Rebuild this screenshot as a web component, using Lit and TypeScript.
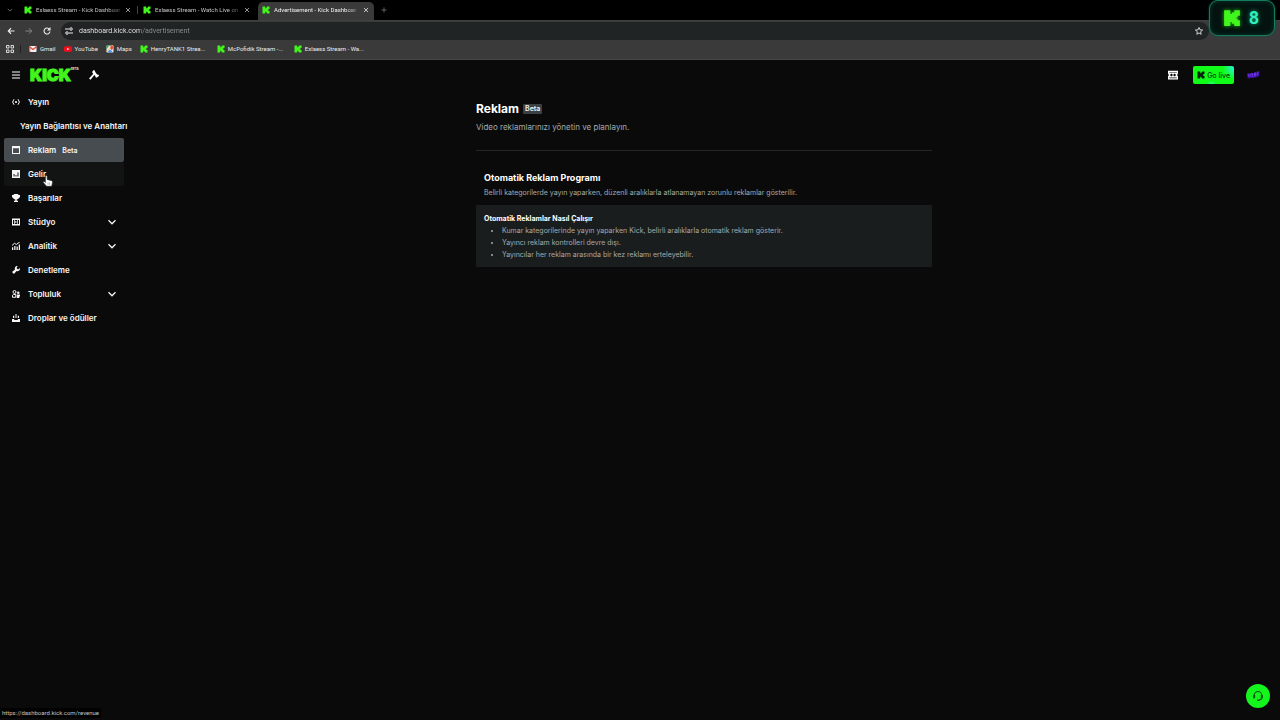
import { LitElement, html, css, svg } from "lit";
import { customElement, property } from "lit/decorators.js";

const kickBlocks = svg`<path d="M1 1h5.500v3.500H8V3h2V1h5v5h-2v1.500h-1.500v1H13V10h2v5h-5v-2H8v-1.500H6.500V15H1z"/>`;

const icons: Record<string, unknown> = {
  menu: svg`<path d="M0 2h16M0 8h16M0 14h16" stroke="currentColor" stroke-width="2"/>`,
  live: svg`<circle cx="8" cy="8" r="2.200" fill="currentColor"/><path d="M4 2.500Q-1.500 8 4 13.500M12 2.500q5.500 5.500 0 11" fill="none" stroke="currentColor" stroke-width="2"/>`,
  window: svg`<path fill-rule="evenodd" d="M0 0h16v16H0zM2 4.500V14h12V4.500z" fill="currentColor"/>`,
  revenue: svg`<path fill-rule="evenodd" d="M0 0h16v16H0zM3 8v5h2V8zM7 10v3h2v-3zM11 5v8h2V5z" fill="currentColor"/>`,
  trophy: svg`<path d="M3.500 0h9v2H16v4l-4 4-2.500 1v2.500H12V16H4v-2.500h2.500V11L4 10 0 6V2h3.500z" fill="currentColor"/>`,
  studio: svg`<path fill-rule="evenodd" d="M0 1h16v14H0zM2 4v8h2V4zM12 4v8h2V4zM5.500 4v8h5V4z" fill="currentColor"/><path d="M6.500 5.500 10 8l-3.500 2.500z" fill="currentColor"/>`,
  analytics: svg`<path d="M0 7l5-4.500L8.500 5 15.500 0" fill="none" stroke="currentColor" stroke-width="2"/><path d="M0 10.500h2.500V16H0zM4.500 8H7v8H4.500zM9 9h2.500v7H9zM13.500 5H16v11h-2.500z" fill="currentColor"/>`,
  wrench: svg`<path d="M16 5.500a5 5 0 0 1-7 4.500L4 16 0 12l6-5a5 5 0 0 1 5.500-7L9 4l3 3 4-3z" fill="currentColor"/>`,
  community: svg`<circle cx="5" cy="4" r="3" fill="none" stroke="currentColor" stroke-width="2"/><path d="M1 14.500v-4L3 9h4.500v5.500z" fill="none" stroke="currentColor" stroke-width="2"/><circle cx="12.500" cy="5.500" r="2.500" fill="currentColor"/><path d="M9.500 9H16v4h-1.500v3h-5z" fill="currentColor"/>`,
  drops: svg`<path d="M0 10h4l1 2h6l1-2h4v6H0zM7 0h2v8H7zM2 3.500h2.500V8H2zM11.500 3.500H14V8h-2.500z" fill="currentColor"/>`,
  chevron: svg`<path d="M1 4.500 8 11.500 15 4.500" fill="none" stroke="currentColor" stroke-width="2.500"/>`,
  gavel: svg`<path d="M7.500 0 9.500 1 10 3l3 4 2.500.500.500 2-4 3-1.500-1-.5-2-1.500-1.500L2.500 15.500 0 13.500 6.500 6.500 6 4.500 4.500 3.500z" fill="currentColor"/>`,
  back: svg`<path d="M15 8H3M8 2.500 2.500 8 8 13.500" fill="none" stroke="currentColor" stroke-width="2.200"/>`,
  forward: svg`<path d="M1 8h12M8 2.500 13.500 8 8 13.500" fill="none" stroke="currentColor" stroke-width="2"/>`,
  reload: svg`<path d="M13 4.500A6 6 0 1 0 14 9" fill="none" stroke="currentColor" stroke-width="2.200"/><path d="M15 0v7H8z" fill="currentColor"/>`,
  tune: svg`<path d="M0 4h8M8 12h8" stroke="currentColor" stroke-width="2"/><circle cx="12" cy="4" r="2.500" fill="none" stroke="currentColor" stroke-width="2"/><circle cx="4" cy="12" r="2.500" fill="none" stroke="currentColor" stroke-width="2"/>`,
  star: svg`<path d="m8 1 2 4.700 5.200.4-4 3.400 1.200 5.100L8 11.900l-4.400 2.700 1.200-5.100-4-3.400L6 5.700z" fill="none" stroke="currentColor" stroke-width="1.700"/>`,
  grid: svg`<path d="M1 1h5v5H1zM10 1h5v5h-5zM1 10h5v5H1zM10 10h5v5h-5z" fill="none" stroke="currentColor" stroke-width="1.800"/>`,
  close: svg`<path d="m2.500 2.500 11 11M13.500 2.500l-11 11" stroke="currentColor" stroke-width="2"/>`,
  plus: svg`<path d="M8 1v14M1 8h14" stroke="currentColor" stroke-width="1.800"/>`,
  down: svg`<path d="m2 5 6 6 6-6" fill="none" stroke="currentColor" stroke-width="2"/>`,
  gmail: svg`<rect x="1" y="2" width="14" height="12" rx="1.500" fill="#f3f0ef"/><path d="M1 3.500 8 9l7-5.500" fill="none" stroke="#dc4436" stroke-width="2.600"/><path d="M2 5v9" stroke="#d96a61" stroke-width="1.500"/>`,
  youtube: svg`<rect x="0" y="2.500" width="16" height="11" rx="3" fill="#f20d18"/><path d="m6.500 5.500 4 2.500-4 2.500z" fill="#fff"/>`,
  maps: svg`<rect x="1" y="1" width="14" height="14" rx="1.500" fill="#e7e8e2"/><path d="M1 1h6L1 8z" fill="#32a454"/><path d="m2 15 6-6 6 6z" fill="#4a8df0"/><path d="M1 13 14 1" stroke="#f6c644" stroke-width="2"/><path d="M11.500 11Q8 6.500 8.500 4.500a3 3 0 0 1 6 0q0 2-3 6.500z" fill="#e34b40"/>`,
  kick: svg`<g fill="#42f51c">${kickBlocks}</g>`,
  kickDark: svg`<g fill="#06200a">${kickBlocks}</g>`,
  ticket: svg`<path fill-rule="evenodd" d="M0 1h16v4.500L14.500 8l1.500 2.500V15H0v-4.500L1.500 8 0 5.500zM2 3v1h12V3zM2 12v1h12v-1zM3 8l2.500 2.500L8 8l2.500 2.500L13 8l-2.500-2.500L8 8 5.500 5.500z" fill="currentColor"/>`,
  avatar: svg`<path d="m1 6.500 3-1 .5 1.500L6 5.500l3 .5.500-1.500 2.500.5 3.500-2-.5 6-4.500 2L8 11l-6 1z" fill="#3b12a0"/><path d="m2.500 7 .5 2.500 2-.5-.3-2.500M8 6.300l-1.800.3.300 1.300 1.500.2.200 1.400-1.700.3M9.500 7.500l2-.3-.2-1.500-1.700.3.300 3 1.800-.4M13 4l.6 4.500" fill="none" stroke="#8340ff" stroke-width=".8"/>`,
  headset: svg`<path d="M3 9V7a5 5 0 0 1 10 0v3q0 3-4 3.500" fill="none" stroke="#04570c" stroke-width="1.500"/><path d="M1.500 6.500h2.700v4.500H1.500zM11.800 6.500h2.700v4.500h-2.700zM7 12.500h2.500v2H7z" fill="#04570c"/>`,
  hand: svg`<path d="M4.500 1.500q0-1 1.200-1t1.200 1V6l6.100 1.500q1 .5 1 2L13 15H6L1.500 9.500q.2-1.500 1.500-1L4.500 10z" fill="#fff" stroke="#222" stroke-width=".8"/><path d="M8 10v3M10 10v3" stroke="#777" stroke-width=".7"/>`,
};

@customElement("ui-icon")
class UiIcon extends LitElement {
  static styles = css`
    :host { display: inline-flex; flex: none; width: 8px; height: 8px; }
    svg { width: 100%; height: 100%; display: block; }
  `;
  @property() name = "";
  render() {
    return html`<svg viewBox="0 0 16 16" aria-hidden="true">${icons[this.name]}</svg>`;
  }
}

@customElement("browser-bar")
class BrowserBar extends LitElement {
  static styles = css`
    :host { display: block; font: 7px/10px Roboto, sans-serif; color: #ececec; background: #000; }
    button { border: 0; padding: 0; background: none; color: inherit; display: inline-flex; align-items: center; justify-content: center; }
    a { color: inherit; text-decoration: none; }
    .tabs { display: flex; height: 20px; padding-left: 5px; align-items: stretch; color: #c4c4c4; font-size: 6px; }
    .search { width: 10px; color: #888; }
    .search ui-icon, .close ui-icon { width: 6px; height: 6px; }
    .tab { display: flex; align-items: center; gap: 4px; width: 119px; padding: 0 3px 0 9px; box-sizing: border-box; }
    .tab.divided { background: linear-gradient(#444, #444) 3px 50% / 1px 8px no-repeat; }
    .tab.active { width: 116px; margin: 2px 0 0 5px; padding: 0 5px 2px 4px; background: #3a3a3a; border-radius: 5px 5px 0 0; color: #f2f2f2; }
    .title { flex: 1; min-width: 0; white-space: nowrap; mask-image: linear-gradient(90deg, #000 84%, rgb(0 0 0 / 0.4) 96%); }
    .new { width: 20px; color: #888; }
    .new ui-icon { width: 6px; height: 6px; }
    .tools { display: flex; align-items: center; height: 20px; padding-left: 7px; gap: 10px; background: #3a3a3a; border-top: 1px solid #414141; box-sizing: border-box; }
    .tools .dim { color: #858585; }
    .address { flex: 1; display: flex; align-items: center; gap: 6px; height: 18px; margin-right: 71px; padding: 0 6px 0 4px; background: #202425; border-radius: 9px; }
    .address input { flex: 1; min-width: 0; border: 0; padding: 0; outline: 0; font: inherit; line-height: 12px; color: transparent;
      background: linear-gradient(90deg, #f4f4f4 61px, #8e9293 61px) text; }
    .marks { display: flex; align-items: center; height: 20px; padding: 0 6px 2px; gap: 8px; background: #3a3a3a; border-bottom: 1px solid #474747; box-sizing: border-box; font-size: 6px; }
    .marks a { display: flex; align-items: center; gap: 3px; white-space: nowrap; }
    .marks .apps { padding-right: 6px; border-right: 1px solid #232323; }
    .marks .long { width: 69px; }
  `;
  tabs = ["Exlaess Stream - Kick Dashboar", "Exlaess Stream - Watch Live on", "Advertisement - Kick Dashboar"];
  marks = [["gmail", "Gmail"], ["youtube", "YouTube"], ["maps", "Maps"], ["kick", "HenryTANK1 Strea..."], ["kick", "McPofidik Stream -..."], ["kick", "Exlaess Stream - Wa..."]];
  render() {
    return html`
      <div class="tabs">
        <button class="search" aria-label="Search tabs"><ui-icon name="down"></ui-icon></button>
        ${this.tabs.map((t, i) => html`<div class="tab ${["", "divided", "active"][i]}">
          <ui-icon name="kick"></ui-icon><span class="title">${t}</span>
          <button class="close" aria-label="Close tab"><ui-icon name="close"></ui-icon></button></div>`)}
        <button class="new" aria-label="New tab"><ui-icon name="plus"></ui-icon></button>
      </div>
      <div class="tools">
        <button aria-label="Back"><ui-icon name="back"></ui-icon></button>
        <button class="dim" aria-label="Forward"><ui-icon name="forward"></ui-icon></button>
        <button aria-label="Reload"><ui-icon name="reload"></ui-icon></button>
        <div class="address">
          <ui-icon name="tune"></ui-icon>
          <input aria-label="Address" .value=${"dashboard.kick.com/advertisement"} />
          <button aria-label="Bookmark"><ui-icon name="star"></ui-icon></button>
        </div>
      </div>
      <nav class="marks">
        <button class="apps" aria-label="Apps"><ui-icon name="grid"></ui-icon></button>
        ${this.marks.map(([i, t]) => html`<a href="#" class=${i === "kick" ? "long" : ""}><ui-icon name=${i}></ui-icon>${t}</a>`)}
      </nav>`;
  }
}

@customElement("side-nav")
class SideNav extends LitElement {
  static styles = css`
    :host { display: block; width: 128px; flex: none; font-size: 8px; font-weight: 600; }
    nav { display: flex; flex-direction: column; }
    a { display: flex; align-items: center; gap: 8px; height: 24px; margin: 0 4px; padding: 0 8px; box-sizing: border-box; color: #f6f6f6; text-decoration: none; white-space: nowrap; border-radius: 2px; }
    .sub { padding-left: 16px; }
    .active { background: #474c50; }
    .hover { background: #121313; }
    .tag { font-size: 7px; margin-left: -2px; }
    .chevron { margin-left: auto; }
  `;
  items: [string, string, string][] = [
    ["live", "Yayın", ""], ["", "Yayın Bağlantısı ve Anahtarı", "sub"], ["window", "Reklam", "active"], ["revenue", "Gelir", "hover"],
    ["trophy", "Başarılar", ""], ["studio", "Stüdyo", "more"], ["analytics", "Analitik", "more"], ["wrench", "Denetleme", ""],
    ["community", "Topluluk", "more"], ["drops", "Droplar ve ödüller", ""],
  ];
  render() {
    return html`<nav>${this.items.map(([icon, label, kind]) => html`<a href="#" class=${kind}>
      ${icon ? html`<ui-icon name=${icon}></ui-icon>` : ""}<span>${label}</span>
      ${kind === "active" ? html`<span class="tag">Beta</span>` : ""}
      ${kind === "more" ? html`<ui-icon class="chevron" name="chevron"></ui-icon>` : ""}</a>`)}</nav>`;
  }
}

@customElement("app-root")
class AppRoot extends LitElement {
  static styles = css`
    :host { display: flex; flex-direction: column; position: relative; min-height: 100vh; background: #0a0a0a; color: #fff; font-family: Inter, sans-serif; overflow: hidden; }
    button { border: 0; padding: 0; background: none; color: inherit; font: inherit; display: inline-flex; align-items: center; }
    header { display: flex; align-items: center; height: 30px; padding: 0 20px 0 12px; }
    .brand { display: flex; margin-left: 10px; color: #42f51c; font-size: 16px; line-height: 18px; font-weight: 900; -webkit-text-stroke: 1px #42f51c; }
    .brand sup { color: #eee; font-size: 3px; line-height: 6px; font-weight: 700; -webkit-text-stroke: 0; }
    .gavel { margin-left: 10px; }
    .gavel ui-icon { width: 10px; height: 10px; }
    .actions { display: flex; align-items: center; gap: 12px; margin-left: auto; }
    .rewards { padding-right: 3px; }
    .rewards ui-icon { width: 10px; height: 10px; }
    .go { height: 18px; padding: 0 4px; gap: 2px; border-radius: 2px; color: #06400f; font-size: 7px; font-weight: 500; background: radial-gradient(circle at 45% 105%, #35ffc0 0, transparent 14%), radial-gradient(circle at 100% 10%, #24f5d2 0, transparent 26%), #11fb19; }
    .go ui-icon { width: 8px; height: 8px; }
    .avatar { width: 14px; height: 14px; }
    .body { display: flex; flex: 1; }
    main { flex: 1; }
    .column { max-width: 456px; margin: 0 auto; padding: 10px 0; font-size: 7px; line-height: 12px; color: #a5aaab; }
    h1, h2, h3, p, ul { margin: 0; }
    .title { display: flex; align-items: center; gap: 4px; }
    h1 { font-size: 12px; line-height: 18px; font-weight: 700; color: #fff; }
    .badge { font-size: 7px; line-height: 10px; font-weight: 600; color: #f0f0f0; background: #3b4044; padding: 0 2px; border-radius: 1px; }
    .lead { font-size: 8px; line-height: 18px; padding-bottom: 14px; border-bottom: 1px solid #242727; }
    .intro { padding: 20px 8px 4px; }
    h2 { font-size: 9px; line-height: 14px; font-weight: 700; color: #fff; }
    .intro p { line-height: 16px; }
    .card { background: #191d1e; padding: 8px 8px 6px; }
    h3 { font-size: 7px; line-height: 12px; font-weight: 700; color: #fff; }
    ul { padding-left: 18px; }
    .counter { position: absolute; top: 0; right: 5px; width: 66px; height: 36px; padding-right: 2px; box-sizing: border-box; border: 1px solid #157d5e; border-radius: 9px; background: #04130f; display: flex; align-items: center; justify-content: center; gap: 8px; box-shadow: 0 0 2px #0b5d45, inset 0 0 5px #06382a; }
    .counter ui-icon { width: 18px; height: 18px; filter: drop-shadow(0 0 2px #1dc718); }
    .counter span { font: 700 18px/20px "DejaVu Sans Mono", monospace; color: #2ff0be; text-shadow: 0 0 4px #12a982; }
    .help { position: absolute; right: 10px; bottom: 12px; width: 24px; height: 24px; border-radius: 50%; justify-content: center; background: #13f51c; }
    .help ui-icon { width: 12px; height: 12px; }
    .status { position: absolute; left: 0; bottom: 2px; padding: 0 2px; background: #020202; color: #c4c4c4; font: 6px/10px Roboto, sans-serif; }
    .pointer { position: absolute; left: 42px; top: 175px; width: 12px; height: 12px; }
  `;
  render() {
    return html`
      <browser-bar></browser-bar>
      <header>
        <button aria-label="Menu"><ui-icon name="menu"></ui-icon></button>
        <div class="brand">KICK<sup>BETA</sup></div>
        <button class="gavel" aria-label="Moderation"><ui-icon name="gavel"></ui-icon></button>
        <div class="actions">
          <button class="rewards" aria-label="Rewards"><ui-icon name="ticket"></ui-icon></button>
          <button class="go"><ui-icon name="kickDark"></ui-icon>Go live</button>
          <button aria-label="Account"><ui-icon class="avatar" name="avatar"></ui-icon></button>
        </div>
      </header>
      <div class="body">
        <side-nav></side-nav>
        <main><div class="column">
          <div class="title"><h1>Reklam</h1><span class="badge">Beta</span></div>
          <p class="lead">Video reklamlarınızı yönetin ve planlayın.</p>
          <div class="intro"><h2>Otomatik Reklam Programı</h2>
            <p>Belirli kategorilerde yayın yaparken, düzenli aralıklarla atlanamayan zorunlu reklamlar gösterilir.</p></div>
          <section class="card"><h3>Otomatik Reklamlar Nasıl Çalışır</h3>
            <ul><li>Kumar kategorilerinde yayın yaparken Kick, belirli aralıklarla otomatik reklam gösterir.</li>
              <li>Yayıncı reklam kontrolleri devre dışı.</li>
              <li>Yayıncılar her reklam arasında bir kez reklamı erteleyebilir.</li></ul></section>
        </div></main>
      </div>
      <div class="counter"><ui-icon name="kick"></ui-icon><span>8</span></div>
      <div class="status">https://dashboard.kick.com/revenue</div>
      <ui-icon class="pointer" name="hand"></ui-icon>
      <button class="help" aria-label="Support"><ui-icon name="headset"></ui-icon></button>`;
  }
}
